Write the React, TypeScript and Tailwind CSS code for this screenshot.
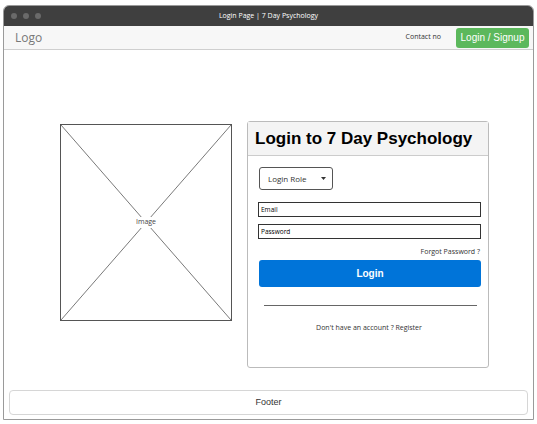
export default function App() {
  return (
    <div className="w-[537px] h-[424px] bg-white pt-[5px] px-[3px] pb-[4px]" style={{ fontFamily: '"Open Sans", "Liberation Sans", sans-serif' }}>
      <div className="flex h-full flex-col overflow-hidden rounded-t-[6px] border border-[#9a9a9a]">
        {/* title bar */}
        <div className="relative flex h-[20px] shrink-0 items-center bg-[#3f3f3f]">
          <div className="ml-[7px] flex gap-[6px]">
            <span className="h-[6px] w-[6px] rounded-full bg-[#6a6a6a]" />
            <span className="h-[6px] w-[6px] rounded-full bg-[#6a6a6a]" />
            <span className="h-[6px] w-[6px] rounded-full bg-[#6a6a6a]" />
          </div>
          <div className="absolute inset-0 flex items-center justify-center text-[7px] text-white">
            Login Page | 7 Day Psychology
          </div>
        </div>

        {/* nav */}
        <div className="flex h-[24px] shrink-0 items-center border-b border-[#cfcfcf] bg-[#f7f7f7]">
          <span className="ml-[11px] text-[12px] text-[#777]">Logo</span>
          <span className="ml-auto text-[7px] text-[#333]">Contact no</span>
          <button className="ml-[15px] mr-[4px] h-[20px] w-[73px] rounded-[3px] bg-[#5cb85c] text-[10px] text-white" style={{ fontFamily: '"Liberation Sans", Arial, sans-serif' }}>
            Login / Signup
          </button>
        </div>

        {/* main */}
        <div className="flex flex-1 items-start gap-[15px] pl-[56px] pt-[71px]">
          <div className="relative mt-[3px] h-[197px] w-[172px] border border-[#555]">
            <svg className="absolute inset-0 h-full w-full" viewBox="0 0 172 197" preserveAspectRatio="none">
              <line x1="0" y1="0" x2="172" y2="197" stroke="#777" strokeWidth="1" />
              <line x1="172" y1="0" x2="0" y2="197" stroke="#777" strokeWidth="1" />
            </svg>
            <span className="absolute inset-0 flex items-center justify-center">
              <span className="bg-white text-[7px] text-[#444]">Image</span>
            </span>
          </div>

          <div className="flex h-[247px] w-[242px] flex-col rounded-[3px] border border-[#bbb]">
            <div className="flex h-[34px] items-center border-b border-[#ccc] bg-[#f4f4f4] pl-[7px]">
              <h1 className="text-[17px] font-bold text-black" style={{ fontFamily: '"Liberation Sans", Arial, sans-serif' }}>
                Login to 7 Day Psychology
              </h1>
            </div>
            <div className="flex flex-col px-[10px]">
              <div className="ml-[1px] mt-[11px] flex h-[23px] w-[74px] items-center justify-between rounded-[3px] border border-[#555] pl-[8px] pr-[6px]">
                <span className="text-[8px] text-[#333]">Login Role</span>
                <svg width="5" height="3" viewBox="0 0 5 3"><path d="M0 0 L5 0 L2.5 3 Z" fill="#333" /></svg>
              </div>
              <div className="mt-[12px] flex h-[15px] w-[223px] items-center border border-[#333] pl-[2px] text-[6.5px] text-black">
                Email
              </div>
              <div className="mt-[7px] flex h-[15px] w-[223px] items-center border border-[#333] pl-[2px] text-[6.5px] text-black">
                Password
              </div>
              <div className="mt-[8px] h-[10px] w-[222px] text-right text-[7px] leading-[10px] text-[#333]">Forgot Password ?</div>
              <button className="ml-[1px] mt-[3px] h-[27px] w-[222px] rounded-[3px] bg-[#0074d9] text-[10px] font-bold text-white" style={{ fontFamily: '"Liberation Sans", Arial, sans-serif' }}>
                Login
              </button>
              <div className="ml-[6px] mt-[18px] h-[1px] w-[213px] bg-[#666]" />
              <div className="mt-[17px] w-[222px] text-center text-[7px] leading-[10px] text-[#333]">
                Don't have an account ? Register
              </div>
            </div>
          </div>
        </div>

        {/* footer */}
        <div className="mx-[5px] mb-[4px] flex h-[25px] shrink-0 items-center justify-center rounded-[4px] border border-[#d6d6d6] text-[9px] text-[#333]" style={{ fontFamily: '"Liberation Sans", Arial, sans-serif' }}>
          Footer
        </div>
      </div>
    </div>
  );
}
